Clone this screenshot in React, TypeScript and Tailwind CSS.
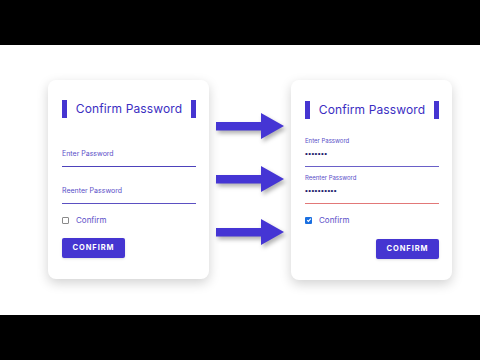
import React from "react"

const font = { fontFamily: "Inter, 'Noto Sans', sans-serif" }

function TitleRow() {
  return (
    <div className="flex h-[18px] items-center justify-between">
      <span className="h-[18px] w-[5px] bg-[#4535d1]" />
      <span className="text-[12px] leading-none tracking-[0.01em] text-[#3b2ec2]">Confirm Password</span>
      <span className="h-[18px] w-[5px] bg-[#4535d1]" />
    </div>
  )
}

function Checkbox({ checked }: { checked?: boolean }) {
  if (checked) {
    return (
      <span className="flex h-[7px] w-[7px] items-center justify-center rounded-[1px] bg-[#1a6fe0]">
        <svg viewBox="0 0 10 10" className="h-[6px] w-[6px]" fill="none" stroke="white" strokeWidth={2}>
          <path d="M2 5.2l2 2 4-4.4" />
        </svg>
      </span>
    )
  }
  return <span className="h-[7px] w-[7px] rounded-[1px] border border-[#8a8a8a] bg-white" />
}

function Button() {
  return (
    <button className="flex h-[20px] w-[63px] items-center justify-center rounded-[2px] bg-[#4535d1] text-[7.5px] font-bold tracking-[0.12em] text-white shadow-sm">
      CONFIRM
    </button>
  )
}

function EmptyCard() {
  return (
    <div className="flex h-[199px] w-[161px] flex-col rounded-lg bg-white pl-[14px] pr-[13px] pt-[20px] shadow-[0_4px_12px_rgba(0,0,0,0.18)]">
      <TitleRow />
      <div className="mt-[31px] border-b border-[#4d42bb] pb-[7px]">
        <div className="text-[7px] leading-[10px] text-[#5a4ec8]">Enter Password</div>
      </div>
      <div className="mt-[19px] border-b border-[#5b50c2] pb-[7px]">
        <div className="text-[7px] leading-[10px] text-[#5a4ec8]">Reenter Password</div>
      </div>
      <div className="mt-[11px] flex h-[10px] items-center gap-[7px]">
        <Checkbox />
        <span className="text-[8px] text-[#5a4ec8]">Confirm</span>
      </div>
      <div className="mt-[13px]">
        <Button />
      </div>
    </div>
  )
}

function FilledCard() {
  return (
    <div className="flex h-[200px] w-[161px] flex-col rounded-lg bg-white pl-[14px] pr-[13px] pt-[21px] shadow-[0_4px_12px_rgba(0,0,0,0.18)]">
      <TitleRow />
      <div className="mt-[18px] border-b border-[#6a60c8] pb-[8px]">
        <div className="text-[6px] leading-[8px] text-[#5a4ec8]">Enter Password</div>
        <div
          className="mt-[5px] text-[8px] leading-[8px] tracking-[0.05em] text-[#1c1a6b]"
          style={{ fontFamily: "'Liberation Sans', sans-serif" }}
        >
          •••••••
        </div>
      </div>
      <div className="mt-[7px] border-b border-[#e27878] pb-[8px]">
        <div className="text-[6px] leading-[8px] text-[#5a4ec8]">Reenter Password</div>
        <div
          className="mt-[5px] text-[8px] leading-[8px] tracking-[0.05em] text-[#1c1a6b]"
          style={{ fontFamily: "'Liberation Sans', sans-serif" }}
        >
          ••••••••••
        </div>
      </div>
      <div className="mt-[11px] flex h-[10px] items-center gap-[7px]">
        <Checkbox checked />
        <span className="text-[8px] text-[#5a4ec8]">Confirm</span>
      </div>
      <div className="mt-[14px] flex justify-end">
        <Button />
      </div>
    </div>
  )
}

function Arrow() {
  return (
    <svg
      viewBox="0 0 68 26"
      className="h-[26px] w-[68px] drop-shadow-[2px_3px_2px_rgba(0,0,0,0.3)]"
    >
      <polygon points="0,9 45,9 45,0 68,13 45,26 45,17.5 0,17.5" fill="#4535d4" />
    </svg>
  )
}

export default function App() {
  return (
    <div className="flex h-[360px] w-[480px] flex-col bg-black" style={font}>
      <div className="h-[45px]" />
      <div className="flex h-[270px] bg-white pl-[48px] pt-[35px]">
        <EmptyCard />
        <div className="ml-[7px] mt-[33px] flex w-[68px] flex-col gap-[27px]">
          <Arrow />
          <Arrow />
          <Arrow />
        </div>
        <div className="ml-[7px]">
          <FilledCard />
        </div>
      </div>
      <div className="h-[45px]" />
    </div>
  )
}
